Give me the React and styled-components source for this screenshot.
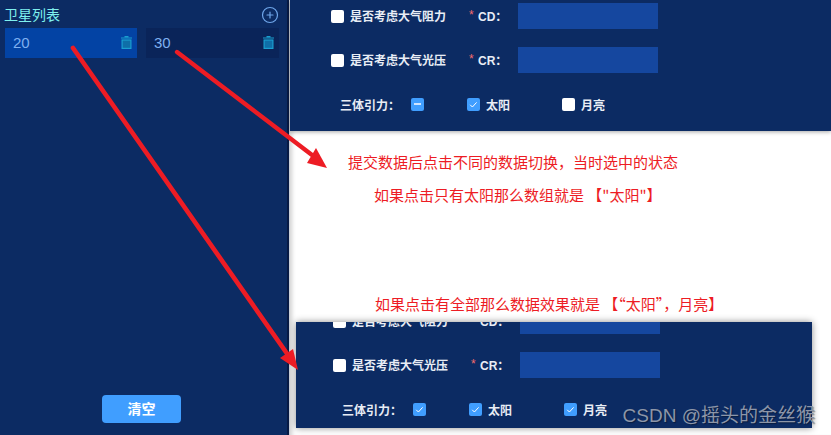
import React from 'react';
import styled, { createGlobalStyle } from 'styled-components';
import { CirclePlus } from 'lucide-react';

const Global = createGlobalStyle`
    html, body {
        margin: 0;
        padding: 0;
        background: #fff;
    }
    body {
        font-family: 'Liberation Sans', 'Noto Sans CJK SC', sans-serif;
    }
`;

function Trash() {
    return (
        <svg width="11" height="13" viewBox="0 0 11 13">
            <path d="M3.5 .6h4M0 2h11" stroke="#1a9fd0" strokeWidth="1.1" fill="none" />
            <rect x="1.1" y="4" width="8.8" height="8.4" fill="#0f6fa8" stroke="#1a9fd0" strokeWidth="1.2" />
        </svg>
    );
}

function Box({ state }) {
    return (
        <CheckBox $on={state !== 'off'}>
            {state === 'on' && (
                <svg width="9" height="9" viewBox="0 0 9 9">
                    <path d="M1.2 4.8l2.2 2.2 4.2-4.6" stroke="#fff" strokeWidth="1" fill="none" />
                </svg>
            )}
            {state === 'mixed' && <Dash />}
        </CheckBox>
    );
}

function FormPanel({ first, second, third, inset, bottom, className }) {
    return (
        <Panel $inset={inset} $bottom={bottom} className={className}>
            <FieldRow>
                <Box state="off" />
                <FieldName>是否考虑大气阻力</FieldName>
                <Star>*</Star>
                <FieldLabel>CD：</FieldLabel>
                <FieldInput />
            </FieldRow>
            <FieldRow>
                <Box state="off" />
                <FieldName>是否考虑大气光压</FieldName>
                <Star>*</Star>
                <FieldLabel>CR：</FieldLabel>
                <FieldInput />
            </FieldRow>
            <TrioRow>
                <TrioLabel>三体引力：</TrioLabel>
                <Option $w={56}><Box state={first} /></Option>
                <Option $w={95}><Box state={second} /><span>太阳</span></Option>
                <Option><Box state={third} /><span>月亮</span></Option>
            </TrioRow>
        </Panel>
    );
}

export default function App() {
    return (
        <Page>
            <Global />
            <Sidebar>
                <SideHead>
                    <SideTitle>卫星列表</SideTitle>
                    <CirclePlus size={18} color="#6fa6ea" strokeWidth={1.6} />
                </SideHead>
                <Cards>
                    <Card $active>
                        <span>20</span>
                        <Trash />
                    </Card>
                    <Card>
                        <span>30</span>
                        <Trash />
                    </Card>
                </Cards>
                <ClearButton>清空</ClearButton>
            </Sidebar>
            <Main>
                <FormPanel first="mixed" second="on" third="off" inset={41} bottom={20} />
                <Notes>
                    <Note $indent={58} $top={21}>提交数据后点击不同的数据切换，当时选中的状态</Note>
                    <Note $indent={84} $top={13}>如果点击只有太阳那么数组就是 【"太阳"】</Note>
                    <Note $indent={85} $top={89}>如果点击有全部那么数据效果就是 【“太阳”，月亮】</Note>
                </Notes>
                <LowerPanel first="on" second="on" third="on" inset={37} bottom={12} />
            </Main>
            <Arrows width="831" height="435" viewBox="0 0 831 435">
                <path d="M73 48L288 355" stroke="#ed1c24" strokeWidth="4.6" strokeLinecap="round" />
                <polygon points="298,370 280,358 293,349" fill="#ed1c24" />
                <path d="M177 52L312 155" stroke="#ed1c24" strokeWidth="4.4" strokeLinecap="round" />
                <polygon points="327,168 307,163 316,148" fill="#ed1c24" />
            </Arrows>
            <Watermark>CSDN @摇头的金丝猴</Watermark>
        </Page>
    );
}

const Page = styled.div`
    position: relative;
    display: flex;
    width: 831px;
    height: 435px;
    overflow: hidden;
`;

const Sidebar = styled.div`
    width: 290px;
    height: 435px;
    box-sizing: border-box;
    flex: none;
    display: flex;
    flex-direction: column;
    padding: 6px 11px 12px 5px;
    background: #0c2b63;
    box-shadow: inset -1px 0 0 #c9ced8, inset -3px 0 0 #071a45;
`;

const SideHead = styled.div`
    display: flex;
    justify-content: space-between;
    align-items: center;
    height: 18px;
    margin-left: -1px;
`;

const SideTitle = styled.div`
    font-size: 14px;
    line-height: 18px;
    color: #7ff0ee;
`;

const Cards = styled.div`
    display: grid;
    grid-template-columns: 132px 133px;
    gap: 9px;
    margin-top: 4px;
`;

const Card = styled.div`
    height: 30px;
    box-sizing: border-box;
    display: flex;
    justify-content: space-between;
    align-items: center;
    padding: 0 5px 2px 8px;
    font-size: 15px;
    color: #7fb0f0;
    background: ${(p) => (p.$active ? '#0343a4' : '#0a2459')};
`;

const ClearButton = styled.div`
    width: 79px;
    height: 28px;
    margin: auto 0 0 97px;
    border-radius: 4px;
    background: #409eff;
    color: #fff;
    font-size: 14px;
    font-weight: bold;
    line-height: 28px;
    text-align: center;
`;

const Main = styled.div`
    flex: 1;
    display: flex;
    flex-direction: column;
    min-width: 0;
    box-shadow: inset 5px 0 4px -3px rgba(0, 0, 0, 0.18);
`;

const Panel = styled.div`
    height: 131px;
    box-sizing: border-box;
    flex: none;
    display: flex;
    flex-direction: column;
    justify-content: flex-end;
    gap: 18px;
    overflow: hidden;
    padding: 0 0 ${(p) => p.$bottom}px ${(p) => p.$inset}px;
    background: #0c2b63;
    box-shadow: 0 1px 4px rgba(0, 0, 0, 0.35);
`;

const LowerPanel = styled(FormPanel)`
    width: 516px;
    height: 106px;
    margin-left: 6px;
    box-shadow: 0 0 7px rgba(0, 0, 0, 0.45);
`;

const FieldRow = styled.div`
    display: flex;
    flex: none;
    align-items: center;
    height: 26px;
`;

const CheckBox = styled.div`
    width: 13px;
    height: 13px;
    flex: none;
    display: flex;
    align-items: center;
    justify-content: center;
    border-radius: 2px;
    background: ${(p) => (p.$on ? '#409eff' : '#fff')};
`;

const Dash = styled.div`
    width: 7px;
    height: 2px;
    background: #cfe4ff;
`;

const FieldName = styled.div`
    width: 119px;
    margin: -2px 0 0 6px;
    font-size: 12px;
    font-weight: bold;
    color: #e8edf5;
`;

const Star = styled.div`
    width: 9px;
    margin-top: -2px;
    font-size: 12px;
    color: #f56c6c;
`;

const FieldLabel = styled.div`
    width: 40px;
    margin-top: -2px;
    font-size: 12px;
    font-weight: bold;
    color: #e8edf5;
`;

const FieldInput = styled.div`
    width: 140px;
    height: 26px;
    background: #15479f;
`;

const TrioRow = styled.div`
    display: flex;
    flex: none;
    align-items: center;
    height: 14px;
    margin: 6px 0 0 9px;
    font-size: 12px;
    font-weight: bold;
    color: #e8edf5;
`;

const TrioLabel = styled.div`
    width: 71px;
`;

const Option = styled.div`
    display: flex;
    align-items: center;
    gap: 6px;
    width: ${(p) => (p.$w ? `${p.$w}px` : 'auto')};
`;

const Notes = styled.div`
    height: 191px;
    box-sizing: border-box;
    flex: none;
    display: flex;
    flex-direction: column;
    font-family: 'Noto Sans CJK SC', sans-serif;
`;

const Note = styled.div`
    margin: ${(p) => p.$top}px 0 0 ${(p) => p.$indent}px;
    font-size: 15px;
    line-height: 20px;
    color: #ed1c24;
`;

const Arrows = styled.svg`
    position: absolute;
    left: 0;
    top: 0;
    pointer-events: none;
`;

const Watermark = styled.div`
    position: absolute;
    right: 16px;
    bottom: 8px;
    font-size: 19px;
    line-height: 22px;
    color: #8d96a8;
    text-shadow: 1px 1px 1px rgba(0, 0, 0, 0.35);
`;
